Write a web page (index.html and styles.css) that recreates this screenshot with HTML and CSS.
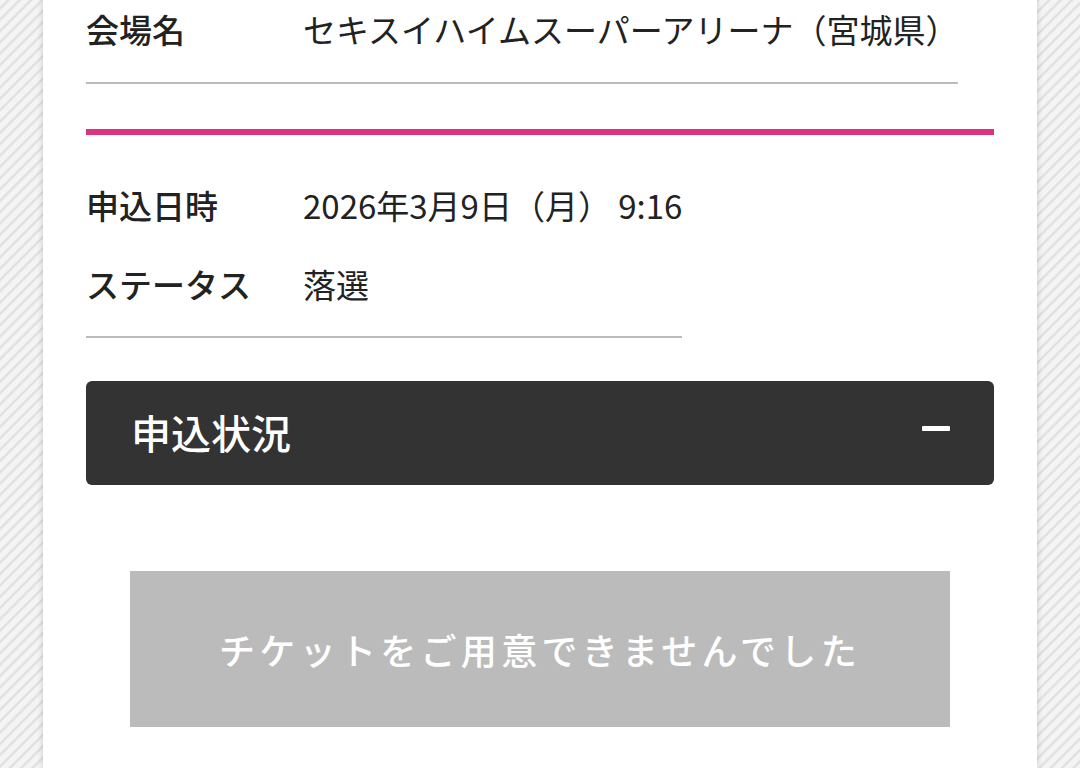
FILE: index.html
```html
<!DOCTYPE html>
<html lang="ja">
<head>
    <meta charset="UTF-8">
    <meta name="viewport" content="width=device-width, initial-scale=1.0">
    <title>申込状況</title>
    <link rel="stylesheet" href="styles.css">
</head>
<body>
    <div class="page">
        <!-- 公演情報 -->
        <dl class="info info-venue">
            <div class="info-row">
                <dt>会場名</dt>
                <dd>セキスイハイムスーパーアリーナ（宮城県）</dd>
            </div>
        </dl>

        <hr class="divider">

        <!-- 申込情報 -->
        <dl class="info info-apply">
            <div class="info-row">
                <dt>申込日時</dt>
                <dd>2026年3月9日（月） 9:16</dd>
            </div>
            <div class="info-row">
                <dt>ステータス</dt>
                <dd>落選</dd>
            </div>
        </dl>

        <div class="accordion">
            <div class="accordion-head">
                <span class="accordion-title">申込状況</span>
                <span class="accordion-toggle"></span>
            </div>
            <div class="accordion-body">
                <div class="ticket-btn">チケットをご用意できませんでした</div>
            </div>
        </div>
    </div>
</body>
</html>
```

FILE: styles.css
```css
html, body {
    height: 100%;
}
body {
    margin: 0;
    font-family: "Noto Sans CJK JP", "Noto Sans", sans-serif;
    color: #222;
    background-color: #f3f3f3;
    background-image: repeating-linear-gradient(135deg, #f4f4f4 0, #f4f4f4 4px, #dcdcdc 6px, #f4f4f4 8px);
    overflow: hidden;
}
.page {
    box-sizing: border-box;
    width: 994px;
    min-height: 100%;
    margin: 0 0 0 43px;
    padding: 0 43px;
    background-color: #fff;
    box-shadow: 0 0 6px rgba(0, 0, 0, 0.18);
}
.info {
    width: fit-content;
    margin: 0;
    border-bottom: 2px solid #bbb;
    display: flex;
    flex-direction: column;
    gap: 31px;
}
.info-venue {
    padding: 5px 0 29px;
}
.info-apply {
    padding: 46px 0 28px;
}
.info-row {
    display: flex;
    font-size: 33px;
    line-height: 48px;
}
.info-row dt {
    width: 217px;
    flex-shrink: 0;
    font-weight: 500;
}
.info-row dd {
    margin: 0;
    white-space: nowrap;
}
.divider {
    margin: 45px 0 0;
    height: 6px;
    border: none;
    background-color: #db3281;
}
.accordion {
    margin-top: 43px;
}
.accordion-head {
    height: 104px;
    padding: 0 44px 0 45px;
    display: flex;
    align-items: center;
    justify-content: space-between;
    background-color: #333;
    border-radius: 6px;
    color: #fff;
}
.accordion-title {
    font-size: 40px;
    font-weight: 500;
    line-height: 1;
    padding-bottom: 2px;
}
.accordion-toggle {
    width: 28px;
    height: 5px;
    margin-top: -10px;
    background-color: #fff;
    border-radius: 1px;
}
.accordion-body {
    padding: 86px 44px 0;
}
.ticket-btn {
    height: 156px;
    display: flex;
    align-items: center;
    justify-content: center;
    background-color: #bbb;
    color: #fff;
    font-size: 36px;
    letter-spacing: 4.3px;
    font-weight: 500;
}
```
